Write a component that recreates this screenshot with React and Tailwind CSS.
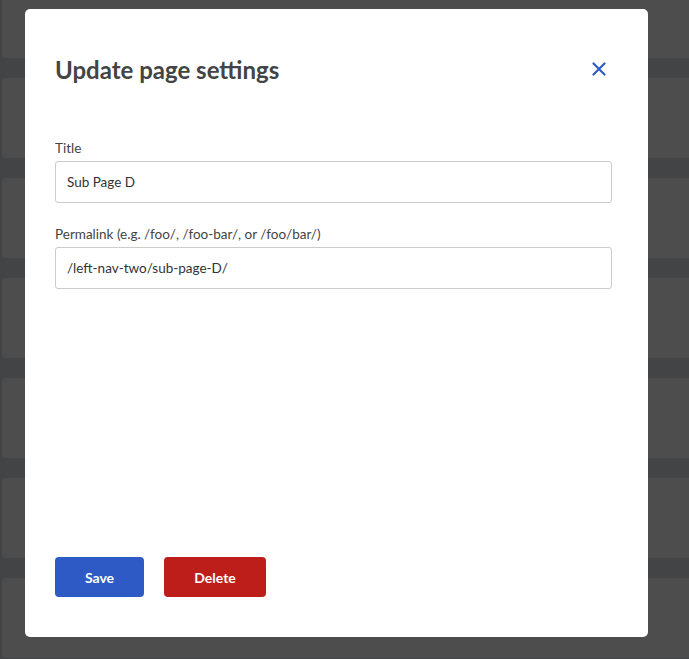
const App = () => {
    const rows = [0, 1, 2, 3, 4, 5, 6];

    return (
        <div className="relative w-[689px] h-[659px] overflow-hidden bg-[#434446]" style={{ fontFamily: 'Lato, "Open Sans", sans-serif' }}>
            {/* Page behind the overlay */}
            <div className="flex flex-col gap-[20px] pl-[2px] -mt-[22px]">
                {rows.map((r) => (
                    <div key={r} className="h-[80px] w-[720px] rounded-[4px] bg-[#4d4d4d]"></div>
                ))}
            </div>

            {/* Modal */}
            <div className="absolute left-[25px] top-[9px] w-[623px] h-[628px] bg-white rounded-[5px] flex flex-col pl-[30px] pr-[36px] pt-[44px] pb-[40px]">
                <div className="flex items-center justify-between">
                    <h2 className="text-[24px] font-bold text-[#444444] leading-[34px]">Update page settings</h2>
                    <button className="mr-[6px] mb-[2px] text-[#2f5bc8]">
                        <svg width="14" height="14" viewBox="0 0 14 14" fill="none" stroke="currentColor" strokeWidth="2.2" strokeLinecap="round">
                            <path d="M1.5 1.5 L12.5 12.5 M12.5 1.5 L1.5 12.5" />
                        </svg>
                    </button>
                </div>

                <div className="mt-[51px] flex flex-col">
                    <label className="text-[13.5px] text-[#444444] leading-[20px] mb-[3px]">Title</label>
                    <input
                        type="text"
                        defaultValue="Sub Page D"
                        className="w-full h-[42px] px-[11px] border border-[#cccccc] rounded-[3px] text-[13.5px] text-[#333333] focus:outline-none"
                    />
                </div>

                <div className="mt-[21px] flex flex-col">
                    <label className="text-[13.5px] text-[#444444] leading-[20px] mb-[3px]">Permalink (e.g. /foo/, /foo-bar/, or /foo/bar/)</label>
                    <input
                        type="text"
                        defaultValue="/left-nav-two/sub-page-D/"
                        className="w-full h-[42px] px-[11px] border border-[#cccccc] rounded-[3px] text-[13.5px] text-[#333333] focus:outline-none"
                    />
                </div>

                <div className="mt-auto flex gap-[20px]">
                    <button className="w-[89px] h-[40px] rounded-[4px] bg-[#2d5ac5] text-white text-[14px] font-bold">Save</button>
                    <button className="w-[102px] h-[40px] rounded-[4px] bg-[#be1e1a] text-white text-[14px] font-bold">Delete</button>
                </div>
            </div>
        </div>
    );
};

export default App;
